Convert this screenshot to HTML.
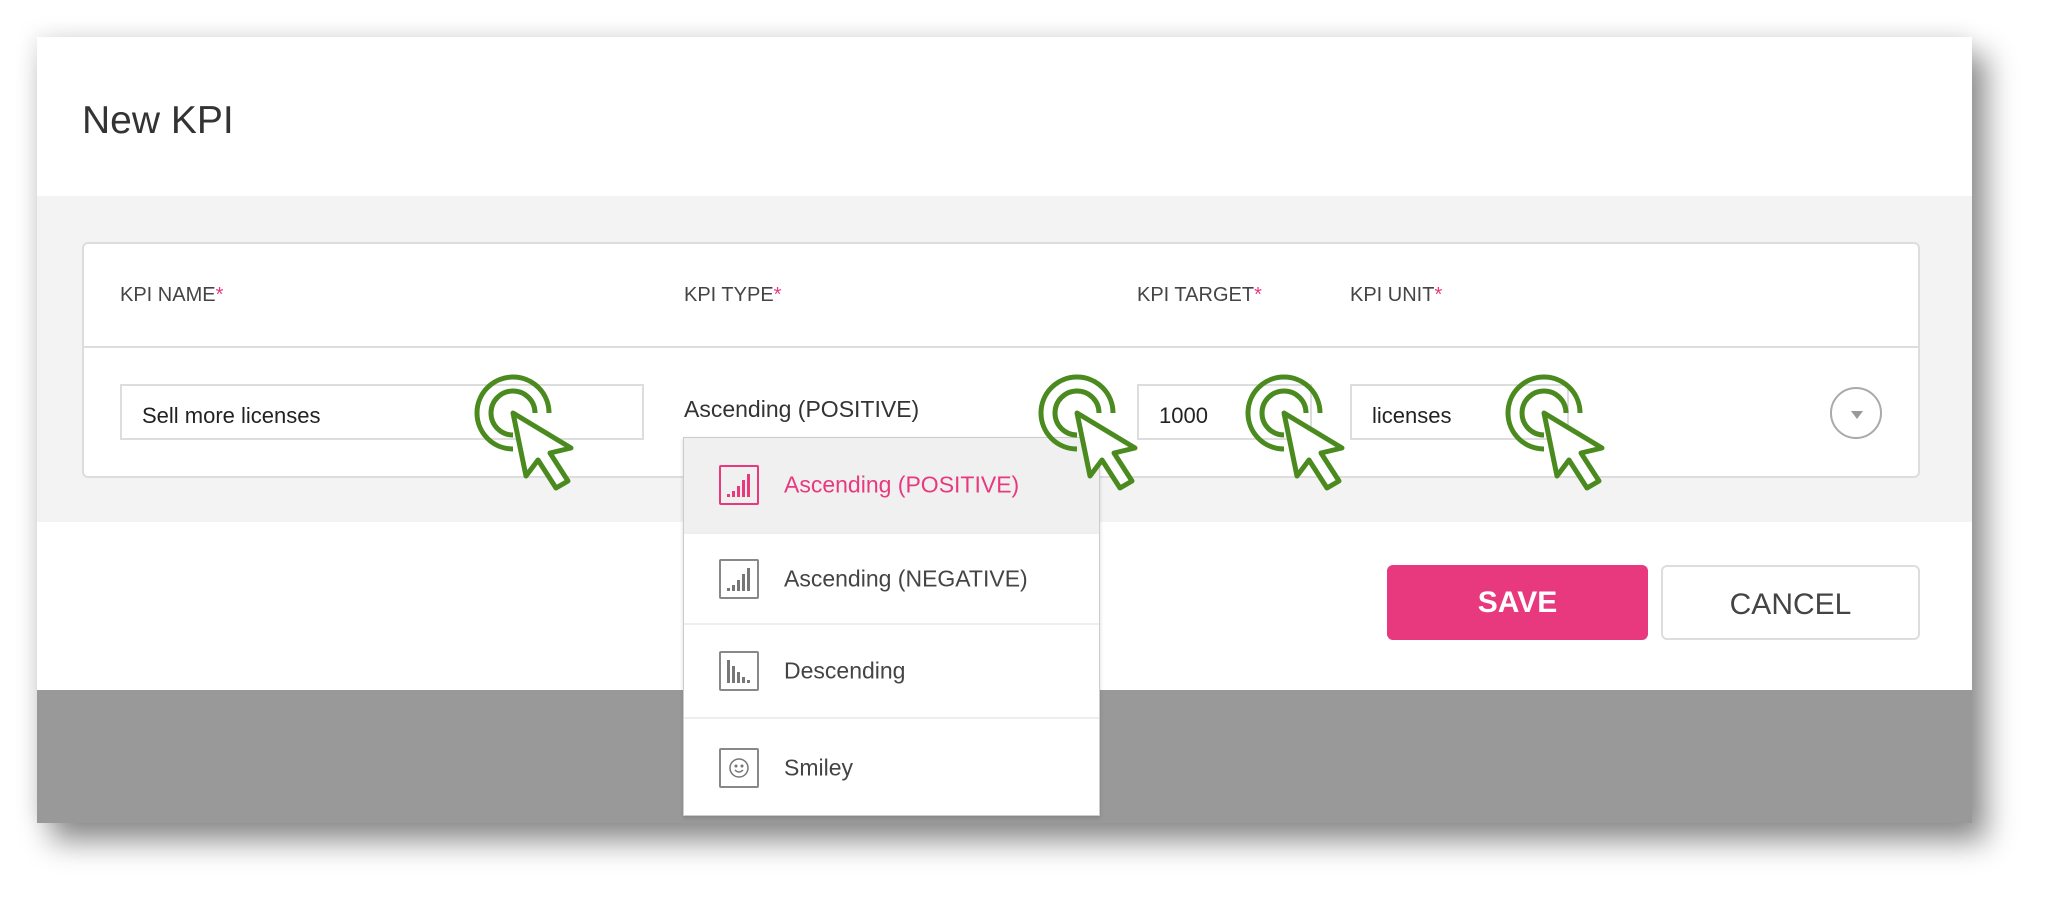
<!DOCTYPE html>
<html><head><meta charset="utf-8"><style>
*{box-sizing:border-box;margin:0;padding:0}
body{width:2048px;height:897px;background:#fff;position:relative;overflow:hidden;font-family:"Liberation Sans",sans-serif;color:#333}
.modal{position:absolute;left:37px;top:37px;width:1935px;height:786px;background:#999;box-shadow:14px 18px 28px rgba(0,0,0,.45),-4px -4px 20px rgba(0,0,0,.08)}
.hdr{position:absolute;left:0;top:0;width:100%;height:159px;background:#fff}
.hdr h1{position:absolute;left:45px;top:62px;font-size:39px;font-weight:normal;color:#333}
.band{position:absolute;left:0;top:159px;width:100%;height:326px;background:#f3f3f3}
.foot{position:absolute;left:0;top:485px;width:100%;height:168px;background:#fff}
.card{position:absolute;left:82px;top:242px;width:1838px;height:236px;background:#fff;border:2px solid #ddd;border-radius:6px}
.card .div{position:absolute;left:0;top:102px;width:100%;height:2px;background:#ddd}
.lbl{position:absolute;top:40px;font-size:20px;color:#444}
.lbl b{color:#e8397f;font-weight:normal}
.inp{position:absolute;top:140px;height:56px;border:2px solid #ddd;font-size:22px;padding:17px 0 0 20px;color:#222}
.sel{position:absolute;left:600px;top:152px;font-size:23px;color:#333}
.circ{position:absolute;left:1746px;top:143px;width:52px;height:52px;border:2px solid #aaa;border-radius:50%}
.circ:after{content:"";position:absolute;left:19px;top:22px;border:6px solid transparent;border-top:8px solid #999}
.dd{position:absolute;left:683px;top:437px;width:417px;height:379px;background:#fff;border:1px solid #ccc;box-shadow:0 2px 4px rgba(0,0,0,.15)}
.it{position:absolute;left:0;width:100%;border-bottom:2px solid #eee;font-size:23px;color:#444}
.it span{position:absolute;left:100px;top:50%;transform:translateY(-50%)}
.ic{position:absolute;left:35px;top:50%;transform:translateY(-50%);width:40px;height:40px;border:2px solid #888;border-radius:2px;color:#777}
.ic svg{position:absolute;left:4px;top:4px}
.btn{position:absolute;top:565px;height:75px;border-radius:6px;font-size:30px;text-align:center;line-height:75px}
.cur{position:absolute;width:130px;height:130px}
</style></head><body>
<div class="modal">
 <div class="hdr"><h1>New KPI</h1></div>
 <div class="band"></div>
 <div class="foot"></div>
</div>
<div class="card">
 <div class="lbl" style="left:36px">KPI NAME<b>*</b></div>
 <div class="lbl" style="left:600px">KPI TYPE<b>*</b></div>
 <div class="lbl" style="left:1053px">KPI TARGET<b>*</b></div>
 <div class="lbl" style="left:1266px">KPI UNIT<b>*</b></div>
 <div class="div"></div>
 <div class="inp" style="left:36px;width:524px">Sell more licenses</div>
 <div class="sel">Ascending (POSITIVE)</div>
 <div class="inp" style="left:1053px;width:175px">1000</div>
 <div class="inp" style="left:1266px;width:219px">licenses</div>
 <div class="circ"></div>
</div>
<div class="btn" style="left:1387px;width:261px;background:#e8397f;color:#fff;font-weight:bold">SAVE</div>
<div class="btn" style="left:1661px;width:259px;background:#fff;border:2px solid #ddd;color:#444">CANCEL</div>
<div class="dd">
 <div class="it" style="top:0;height:96px;background:#f0f0f0;color:#e8397f"><div class="ic" style="border-color:#e8397f;color:#e8397f"><svg width="28" height="28" fill="currentColor"><rect x="2" y="23" width="3" height="3"/><rect x="7" y="20" width="3" height="6"/><rect x="12" y="15" width="3" height="11"/><rect x="17" y="9" width="3" height="17"/><rect x="22" y="3" width="3" height="23"/></svg></div><span>Ascending (POSITIVE)</span></div>
 <div class="it" style="top:96px;height:91px"><div class="ic"><svg width="28" height="28" fill="currentColor"><rect x="2" y="23" width="3" height="3"/><rect x="7" y="20" width="3" height="6"/><rect x="12" y="15" width="3" height="11"/><rect x="17" y="9" width="3" height="17"/><rect x="22" y="3" width="3" height="23"/></svg></div><span>Ascending (NEGATIVE)</span></div>
 <div class="it" style="top:187px;height:94px"><div class="ic"><svg width="28" height="28" fill="currentColor"><rect x="2" y="3" width="3" height="23"/><rect x="7" y="9" width="3" height="17"/><rect x="12" y="15" width="3" height="11"/><rect x="17" y="20" width="3" height="6"/><rect x="22" y="23" width="3" height="3"/></svg></div><span>Descending</span></div>
 <div class="it" style="top:281px;height:97px;border:none"><div class="ic"><svg width="28" height="28" fill="none" stroke="currentColor" stroke-width="1.5"><circle cx="14" cy="14" r="9"/><circle cx="11" cy="12" r=".8" fill="currentColor"/><circle cx="17" cy="12" r=".8" fill="currentColor"/><path d="M10,16 Q14,20 18,16"/></svg></div><span>Smiley</span></div>
</div>
<svg width="0" height="0" style="position:absolute"><defs><g id="c" fill="none" stroke="#4a8a1f" stroke-width="5">
<path d="M45,81 A36,36 0 1 1 81,45"/><path d="M45,67 A22,22 0 1 1 67,45"/>
<polygon points="45,45 58,108 70,92 88,120 100,113 82,85 103,80" fill="#fff" stroke-linejoin="round"/></g></defs></svg>
<svg class="cur" style="left:468px;top:368px"><use href="#c"/></svg>
<svg class="cur" style="left:1032px;top:368px"><use href="#c"/></svg>
<svg class="cur" style="left:1239px;top:368px"><use href="#c"/></svg>
<svg class="cur" style="left:1499px;top:368px"><use href="#c"/></svg>
</body></html>
